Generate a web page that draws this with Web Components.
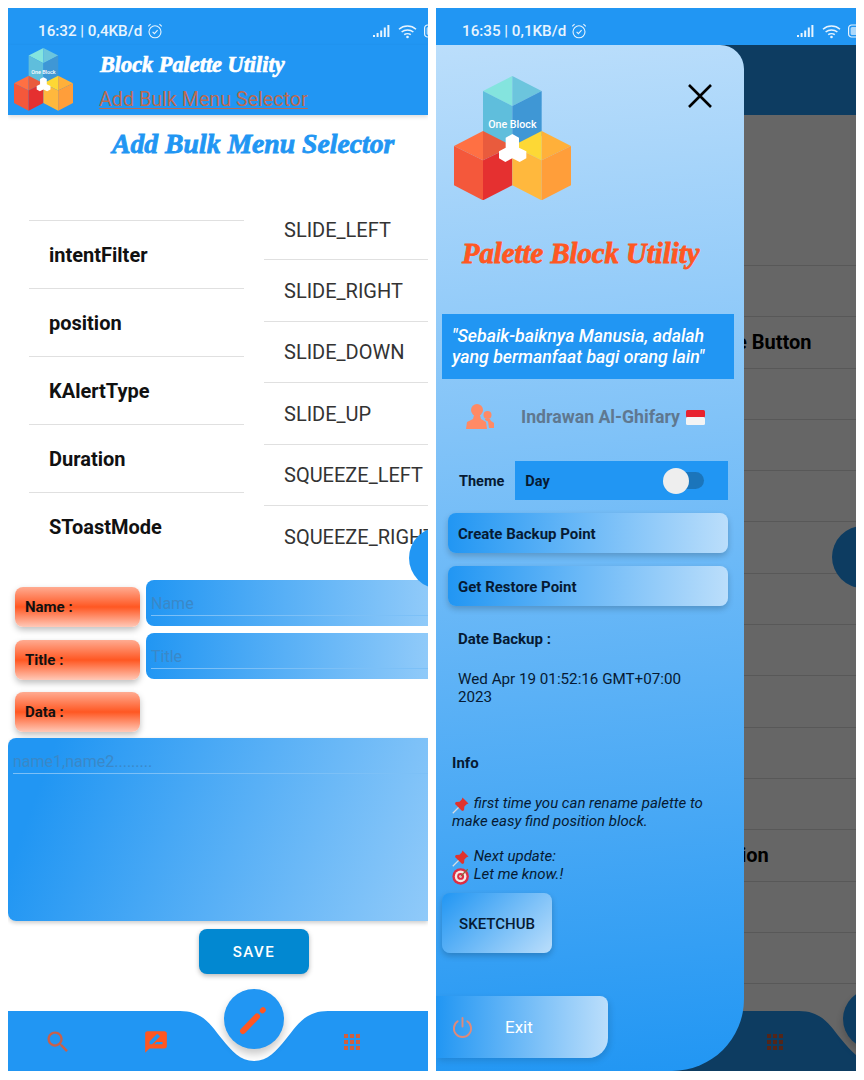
<!DOCTYPE html>
<html>
<head>
<meta charset="utf-8">
<title>Block Palette Utility</title>
<style>
    html, body { background: #fff; }
    body { margin: 8px; display: flex; gap: 8px; font-family: Roboto, sans-serif; }
</style>
</head>
<body>
<bulk-screen></bulk-screen>
<settings-screen></settings-screen>

<script>
const ICONS = {
    search: "M15.5 14h-.79l-.28-.27C15.41 12.59 16 11.11 16 9.5 16 5.91 13.09 3 9.5 3S3 5.91 3 9.5 5.91 16 9.5 16c1.61 0 3.09-.59 4.23-1.57l.27.28v.79l5 4.99L20.49 19l-4.99-5zm-6 0C7.01 14 5 11.99 5 9.5S7.01 5 9.5 5 14 7.01 14 9.5 11.99 14 9.5 14z",
    review: "M20 2H4c-1.1 0-2 .9-2 2v18l4-4h14c1.1 0 2-.9 2-2V4c0-1.1-.9-2-2-2zM6 14v-2.47l6.88-6.88c.2-.2.51-.2.71 0l1.77 1.77c.2.2.2.51 0 .71L8.47 14H6zm12 0h-7.5l2-2H18v2z",
    apps: "M4 8h4V4H4v4zm6 12h4v-4h-4v4zm-6 0h4v-4H4v4zm0-6h4v-4H4v4zm6 0h4v-4h-4v4zm6-10v4h4V4h-4zm-6 4h4V4h-4v4zm6 6h4v-4h-4v4zm0 6h4v-4h-4v4z"
};

const PIN = `<svg width="18" height="18" viewBox="0 0 24 24" style="vertical-align:-3px;margin:-3px 0"><path d="M1 23 11 13" stroke="#d7dde3" stroke-width="1.6"/><path d="M14 2 22 10 19.5 11 16.5 14 16 19 13.5 20 4 10.5 5 8 10 7.5 13 4.5Z" fill="#e0332e"/></svg>`;
const TARGET = `<svg width="18" height="18" viewBox="0 0 24 24" style="vertical-align:-3px;margin:-3px 0"><circle cx="11.5" cy="12.5" r="11" fill="#dd2e44"/><circle cx="11.5" cy="12.5" r="7.8" fill="#f4e9e4"/><circle cx="11.5" cy="12.5" r="4.6" fill="#dd2e44"/><circle cx="11.5" cy="12.5" r="1.8" fill="#f4e9e4"/><path d="M11.5 12.5 21 3" stroke="#8a6a3a" stroke-width="1.6"/></svg>`;

class blockLogo extends HTMLElement {
    constructor() {
        super();
        this.attachShadow({ mode: "open" });
    }

    connectedCallback() {
        const width = this.getAttribute("width") || 117;
        this.shadowRoot.innerHTML = `
        <style>
            :host { display: block; line-height: 0; }
            text { font-family: Roboto, sans-serif; font-weight: 500; font-size: 32px; fill: #fff; text-anchor: middle; }
        </style>
        <svg width="${width}" viewBox="0 0 351 373">
            <polygon points="175,0 175,90 87,45" fill="#84e4de"/>
            <polygon points="175,0 263,45 175,90" fill="#6cc5dd"/>
            <polygon points="87,45 175,90 175,215 87,180" fill="#5fbedc"/>
            <polygon points="175,90 263,45 263,180 175,215" fill="#3f97d5"/>
            <polygon points="87,165 87,253 0,210" fill="#ff7043"/>
            <polygon points="87,165 175,210 87,253" fill="#e95b3d"/>
            <polygon points="0,210 87,253 87,373 0,328" fill="#f4583b"/>
            <polygon points="87,253 175,210 175,328 87,373" fill="#e53030"/>
            <polygon points="263,165 263,253 175,210" fill="#fdd835"/>
            <polygon points="263,165 351,210 263,253" fill="#ffb03a"/>
            <polygon points="175,210 263,253 263,373 175,328" fill="#ffb83d"/>
            <polygon points="263,253 351,210 351,328 263,373" fill="#ff9e3a"/>
            <g fill="#fff">
                <polygon points="175,174 195,185 195,215 217,226 217,247 197,258 175,247 154,258 135,247 135,226 155,215 155,185"/>
            </g>
            <text x="175" y="156">One Block</text>
        </svg>`;
    }
}

class statusBar extends HTMLElement {
    constructor() {
        super();
        this.attachShadow({ mode: "open" });
    }

    connectedCallback() {
        const time = this.getAttribute("time") || "";
        this.shadowRoot.innerHTML = `
        <style>
            :host { display: flex; height: 37px; box-sizing: border-box; padding: 14px 0 0 var(--start, 30px); background: #2196f3; color: #e8f4fe; align-items: flex-start; justify-content: space-between; overflow: hidden; }
            .left { display: flex; align-items: center; gap: 5px; font: 500 15.2px/18px Roboto, sans-serif; white-space: nowrap; }
            .right { display: flex; align-items: center; gap: 7px; height: 18px; margin-right: var(--edge, 0px); }
        </style>
        <div class="left">
            <span>${time}</span>
            <svg width="16" height="16" viewBox="0 0 16 16" fill="none" stroke="#e8f4fe" stroke-width="1.1"><circle cx="8" cy="8.8" r="6"/><path d="M5.6 8.8 7.4 10.6 10.6 7.2M1.2 3.4 3.6 1.2M14.8 3.4 12.4 1.2"/></svg>
        </div>
        <div class="right">
            <svg width="18" height="14" viewBox="0 0 18 14" fill="#e8f4fe"><rect x="0" y="11" width="2" height="2"/><rect x="3.6" y="9" width="2" height="4"/><rect x="7.2" y="6.5" width="2" height="6.5"/><rect x="10.8" y="3.5" width="2" height="9.5"/><rect x="14.4" y="1" width="2" height="12"/></svg>
            <svg width="19" height="15" viewBox="0 0 19 15" fill="none" stroke="#e8f4fe" stroke-width="1.5"><path d="M1 5.2C5.8.9 13.2.9 18 5.2M3.6 8C6.9 5.2 12.1 5.2 15.4 8M6.2 10.7C8 9.3 11 9.3 12.8 10.7"/><circle cx="9.5" cy="13" r="1.3" fill="#e8f4fe" stroke="none"/></svg>
            <svg width="24" height="14" viewBox="0 0 24 14" fill="none" stroke="#e8f4fe" stroke-width="1.2"><rect x=".6" y="1" width="21" height="12" rx="3"/><rect x="2.6" y="3" width="15" height="8" rx="1.5" fill="#e8f4fe" stroke="none" opacity=".7"/></svg>
        </div>`;
    }
}

class appHeader extends HTMLElement {
    constructor() {
        super();
        this.attachShadow({ mode: "open" });
    }

    connectedCallback() {
        this.shadowRoot.innerHTML = `
        <style>
            :host { display: flex; height: 70px; background: #2196f3; box-shadow: 0 2px 4px rgba(0,0,0,.14); position: relative; }
            block-logo { margin: 3px 27px 0 6px; }
            h1 { margin: 7px 0 0; height: 26px; font: italic 700 22.3px/26px "Liberation Serif", serif; color: #fff; -webkit-text-stroke: .7px #fff; white-space: nowrap; }
            a { display: block; margin: 10px 0 0 -1px; font: 400 19.7px/24px Roboto, sans-serif; color: #bd6a50; white-space: nowrap; }
            a span { text-decoration: underline 1px #bd6a50; text-underline-offset: 2px; }
        </style>
        <block-logo width="59"></block-logo>
        <div>
            <h1><slot name="title"></slot></h1>
            <a><span><slot name="sub"></slot></span></a>
        </div>`;
    }
}

class menuRow extends HTMLElement {
    constructor() {
        super();
        this.attachShadow({ mode: "open" });
    }

    connectedCallback() {
        this.shadowRoot.innerHTML = `
        <style>
            :host { display: flex; align-items: center; box-sizing: border-box; padding: 1px 0 0 20px; font-size: 20px; white-space: nowrap; color: #333; overflow: hidden; }
            :host([strong]) { font-weight: 700; color: #111; }
        </style>
        <slot></slot>`;
    }
}

class formField extends HTMLElement {
    constructor() {
        super();
        this.attachShadow({ mode: "open" });
    }

    connectedCallback() {
        const label = this.getAttribute("label") || "";
        const hint = this.getAttribute("hint");
        this.shadowRoot.innerHTML = `
        <style>
            :host { display: flex; gap: 6px; height: 52.6px; padding-left: 7px; }
            .label { width: 125px; height: 40px; margin-top: 7px; box-sizing: border-box; padding-left: 10px; border-radius: 8px; display: flex; align-items: center; font: 700 15px Roboto, sans-serif; color: #111; background: linear-gradient(180deg, #ffab91 0%, #ff5722 50%, #ffc9b8 100%); box-shadow: 0 3px 6px rgba(0,0,0,.25); }
            .input { flex: 1; height: 46px; box-sizing: border-box; padding: 15px 0 0 5px; border-radius: 8px 0 0 8px; background: linear-gradient(90deg, #2196f3, #90caf9); font: 400 16px/18px Roboto, sans-serif; color: #3a88c8; }
            .input div { border-bottom: 1px solid #7cc0f7; height: 20px; }
        </style>
        <div class="label">${label}</div>
        ${hint ? `<div class="input"><div>${hint}</div></div>` : ""}`;
    }
}

class bottomNav extends HTMLElement {
    constructor() {
        super();
        this.attachShadow({ mode: "open" });
    }

    connectedCallback() {
        const n = Number(this.getAttribute("notch") || 246);
        const cell = this.getAttribute("cell") || 98;
        const notch = `M0 0H${n - 74}C${n - 50} 0 ${n - 42} 16 ${n - 32} 28C${n - 22} 40 ${n - 14} 50 ${n} 50C${n + 14} 50 ${n + 22} 40 ${n + 32} 28C${n + 42} 16 ${n + 50} 0 ${n + 74} 0H420V60H0Z`;
        this.shadowRoot.innerHTML = `
        <style>
            :host { display: grid; grid-template-columns: repeat(4, ${cell}px); justify-items: center; align-items: center; height: 60px; position: relative; padding-left: 1px; }
            .shape { position: absolute; inset: 0; }
            .item { position: relative; display: flex; margin-top: 2px; }
            .fab { position: absolute; left: ${n - 30}px; top: -22px; width: 60px; height: 60px; border-radius: 50%; background: #2196f3; box-shadow: 0 5px 8px rgba(0,0,0,.22); }
        </style>
        <svg class="shape" width="420" height="60" viewBox="0 0 420 60"><path d="${notch}" fill="#2196f3"/></svg>
        <svg class="item" width="28" height="28" viewBox="0 0 24 24" fill="#c9604a"><path d="${ICONS.search}"/></svg>
        <svg class="item" width="26" height="26" viewBox="0 0 24 24" fill="#ff5722"><path d="${ICONS.review}"/></svg>
        <span></span>
        <svg class="item" width="24" height="24" viewBox="0 0 24 24" fill="#d0603f"><path d="${ICONS.apps}"/></svg>
        <div class="fab">
            <svg width="60" height="60" viewBox="0 0 60 60" fill="none" stroke="#ff5722" stroke-linecap="round"><path d="M19 42 33 27.5" stroke-width="6"/><path d="M38.5 21.5 39 21" stroke-width="5.5"/></svg>
        </div>`;
    }
}

class bulkScreen extends HTMLElement {
    constructor() {
        super();
        this.attachShadow({ mode: "open" });
    }

    connectedCallback() {
        this.shadowRoot.innerHTML = `
        <style>
            :host { display: flex; flex-direction: column; width: 420px; height: 1063px; position: relative; overflow: hidden; background: #fff; font-family: Roboto, sans-serif; }
            h2 { margin: 0; height: 84px; box-sizing: border-box; padding: 12px 0 0 104px; font: italic 700 27.7px/34px "Liberation Serif", serif; color: #2196f3; -webkit-text-stroke: .8px #2196f3; white-space: nowrap; }
            .lists { display: flex; height: 381px; }
            .left { width: 215px; margin: 21px 20px 0 21px; }
            .left menu-row { height: 68px; border-top: 1px solid #e0e0e0; }
            .right { width: 164px; }
            .right menu-row { height: 61.4px; border-bottom: 1px solid #e0e0e0; }
            .right menu-row:last-child { border-bottom: 0; }
            .area { height: 183px; box-sizing: border-box; padding: 15px 0 0 5px; border-radius: 8px 0 0 8px; background: linear-gradient(110deg, #2196f3 10%, #90caf9 100%); box-shadow: 0 2px 4px rgba(0,0,0,.2); font: 400 16px/18px Roboto, sans-serif; color: #3a88c8; }
            .area div { height: 20px; border-bottom: 1px solid #7cc0f7; }
            .save { margin: 8px 0 37px 191px; width: 110px; height: 45px; padding-top: 1px; box-sizing: border-box; border-radius: 8px; background: #0288d1; color: #fff; display: flex; align-items: center; justify-content: center; font: 500 15px Roboto, sans-serif; letter-spacing: 1.5px; box-shadow: 0 2px 5px rgba(0,0,0,.28); }
            .side-fab { position: absolute; left: 401px; top: 519px; width: 62px; height: 62px; border-radius: 50%; background: #2196f3; }
        </style>
        <status-bar time="16:32 | 0,4KB/d" style="--edge:-20px"></status-bar>
        <app-header>
            <span slot="title">Block Palette Utility</span>
            <span slot="sub">Add Bulk Menu Selector</span>
        </app-header>
        <h2>Add Bulk Menu Selector</h2>
        <div class="lists">
            <div class="left">
                <menu-row strong>intentFilter</menu-row>
                <menu-row strong>position</menu-row>
                <menu-row strong>KAlertType</menu-row>
                <menu-row strong>Duration</menu-row>
                <menu-row strong>SToastMode</menu-row>
            </div>
            <div class="right">
                <menu-row>SLIDE_LEFT</menu-row>
                <menu-row>SLIDE_RIGHT</menu-row>
                <menu-row>SLIDE_DOWN</menu-row>
                <menu-row>SLIDE_UP</menu-row>
                <menu-row>SQUEEZE_LEFT</menu-row>
                <menu-row>SQUEEZE_RIGHT</menu-row>
            </div>
        </div>
        <form-field label="Name :" hint="Name"></form-field>
        <form-field label="Title :" hint="Title"></form-field>
        <form-field label="Data :"></form-field>
        <div class="area"><div>name1,name2.........</div></div>
        <div class="save">SAVE</div>
        <bottom-nav></bottom-nav>
        <div class="side-fab"></div>`;
    }
}

class drawerButton extends HTMLElement {
    constructor() {
        super();
        this.attachShadow({ mode: "open" });
    }

    connectedCallback() {
        this.shadowRoot.innerHTML = `
        <style>
            :host { display: flex; align-items: center; box-sizing: border-box; padding-top: 1px; border-radius: 8px; background: linear-gradient(90deg, #2196f3, #bbdefb); box-shadow: 0 3px 6px rgba(0,0,0,.2); font: 700 15px Roboto, sans-serif; color: #061a33; }
        </style>
        <slot></slot>`;
    }
}

class appDrawer extends HTMLElement {
    constructor() {
        super();
        this.attachShadow({ mode: "open" });
    }

    connectedCallback() {
        this.shadowRoot.innerHTML = `
        <style>
            :host { display: flex; flex-direction: column; position: absolute; left: 0; top: 37px; width: 308px; height: 1026px; border-radius: 0 24px 72px 0; background: linear-gradient(175deg, #bbdefb 0%, #2196f3 100%); font-family: Roboto, sans-serif; color: #061a33; overflow: hidden; }
            .top { display: flex; justify-content: space-between; align-items: flex-start; height: 125px; padding: 31px 32px 0 18px; }
            .close { margin-top: 8px; }
            h2 { margin: 35px 0 0; height: 34px; padding-left: 26px; font: italic 700 28.7px/34px "Liberation Serif", serif; color: #ff5722; -webkit-text-stroke: .8px #ff5722; white-space: nowrap; }
            .quote { margin: 44px 0 0 6px; width: 292px; height: 65px; box-sizing: border-box; padding: 12px 0 0 10px; background: #2196f3; color: #fff; font: italic 500 17.7px/21px Roboto, sans-serif; white-space: nowrap; }
            .author { display: flex; align-items: center; margin-top: 21px; height: 34px; padding-left: 30px; font: 700 17.7px Roboto, sans-serif; color: #5f7890; white-space: nowrap; }
            .author svg:first-child { margin-right: 27px; }
            .author .flag { margin-left: 6px; }
            .theme { display: flex; align-items: center; margin: 27px 0 0 23px; height: 39px; font: 700 14.5px Roboto, sans-serif; }
            .theme > span, .day > span { padding-top: 2px; }
            .day { display: flex; align-items: center; justify-content: space-between; width: 213px; height: 39px; margin-left: 11px; box-sizing: border-box; padding: 0 24px 0 10px; background: #2196f3; }
            .switch { position: relative; width: 40px; height: 17px; border-radius: 9px; background: #1b75bb; }
            .switch i { position: absolute; left: -1px; top: -4.5px; width: 26px; height: 26px; border-radius: 50%; background: #eee; }
            .action { margin: 13px 0 0 12px; width: 280px; height: 40px; padding-left: 10px; }
            .bold { font: 700 15px/18px Roboto, sans-serif; }
            .date { margin: 22px 0 0 22px; height: 36px; width: 240px; font: 400 15.2px/18px Roboto, sans-serif; }
            .notes { margin: 23px 0 0 16px; height: 88.5px; font: italic 400 15px/17.7px Roboto, sans-serif; white-space: nowrap; }
            .sketchub { margin: 9.5px 0 0 6px; width: 110px; height: 60px; justify-content: center; background: linear-gradient(135deg, #2196f3, #bbdefb); font: 500 15px Roboto, sans-serif; }
            .exit { display: flex; align-items: center; margin-top: 43px; width: 172px; height: 62px; box-sizing: border-box; padding-left: 16px; border-radius: 0 8px 20px 0; background: linear-gradient(90deg, #2196f3, #bbdefb); box-shadow: 2px 3px 6px rgba(0,0,0,.12); color: #fff; font: 400 17px Roboto, sans-serif; }
            .exit svg { margin-right: 32px; }
        </style>
        <div class="top">
            <block-logo width="117"></block-logo>
            <svg class="close" width="24" height="24" viewBox="0 0 24 24" fill="none" stroke="#000" stroke-width="2.6"><path d="M1 1 23 23M23 1 1 23"/></svg>
        </div>
        <h2>Palette Block Utility</h2>
        <div class="quote">"Sebaik-baiknya Manusia, adalah<br>yang bermanfaat bagi orang lain"</div>
        <div class="author">
            <svg width="28" height="28" viewBox="0 0 28 28" fill="#ff8a65"><circle cx="11" cy="7" r="6"/><path d="M8 12h6l1 4 5 3 1 7H0l1-7 6-3z"/><circle cx="21.5" cy="12" r="4"/><path d="M19 16h5l1 2 3 2v5h-5l-1-6.5-3-1.5z"/></svg>
            <span>Indrawan Al-Ghifary</span>
            <svg class="flag" width="19" height="15" viewBox="0 0 19 15"><rect width="19" height="7.5" rx="1.5" fill="#e8222e"/><rect y="7" width="19" height="8" rx="1.5" fill="#f4f4f4"/></svg>
        </div>
        <div class="theme">
            <span>Theme</span>
            <div class="day"><span>Day</span><div class="switch"><i></i></div></div>
        </div>
        <drawer-button class="action">Create Backup Point</drawer-button>
        <drawer-button class="action">Get Restore Point</drawer-button>
        <div class="bold" style="margin:24px 0 0 22px">Date Backup :</div>
        <div class="date">Wed Apr 19 01:52:16 GMT+07:00 2023</div>
        <div class="bold" style="margin:48px 0 0 16px">Info</div>
        <div class="notes">${PIN} first time you can rename palette to<br>make easy find position block.<br><br>${PIN} Next update:<br>${TARGET} Let me know.!</div>
        <drawer-button class="sketchub">SKETCHUB</drawer-button>
        <div class="exit">
            <svg width="21" height="21" viewBox="0 0 22 22" fill="none" stroke="#e08a7a" stroke-width="2" stroke-linecap="round"><path d="M6 4.5a9 9 0 1 0 10 0M11 1v9"/></svg>
            <span>Exit</span>
        </div>`;
    }
}

class settingsScreen extends HTMLElement {
    constructor() {
        super();
        this.attachShadow({ mode: "open" });
    }

    connectedCallback() {
        const rows = Array.from({ length: 16 }, (_, i) => {
            if (i === 1) return `<div class="row"><span>e Button</span></div>`;
            if (i === 11) return `<div class="row"><span style="padding-left:5px">ion</span></div>`;
            return `<div class="row"></div>`;
        }).join("");
        this.shadowRoot.innerHTML = `
        <style>
            :host { display: flex; flex-direction: column; width: 420px; height: 1063px; position: relative; overflow: hidden; background: #fff; font-family: Roboto, sans-serif; }
            .bar { height: 70px; background: #2196f3; flex: none; }
            .rows { flex: 1; padding-top: 150px; overflow: hidden; }
            .row { display: flex; align-items: center; height: 51.3px; box-sizing: border-box; border-top: 1px solid #dcdcdc; padding-left: 300px; font: 700 20px Roboto, sans-serif; color: #000; }
            .side-fab { position: absolute; left: 396px; top: 518px; width: 62px; height: 62px; border-radius: 50%; background: #2196f3; }
            .scrim { position: absolute; left: 0; right: 0; top: 37px; bottom: 0; background: rgba(0,0,0,.6); }
        </style>
        <status-bar time="16:35 | 0,1KB/d" style="--start:26px;--edge:-16px"></status-bar>
        <div class="bar"></div>
        <div class="rows">${rows}</div>
        <bottom-nav notch="437" cell="96.7"></bottom-nav>
        <div class="side-fab"></div>
        <div class="scrim"></div>
        <app-drawer></app-drawer>`;
    }
}

customElements.define("block-logo", blockLogo);
customElements.define("status-bar", statusBar);
customElements.define("app-header", appHeader);
customElements.define("menu-row", menuRow);
customElements.define("form-field", formField);
customElements.define("bottom-nav", bottomNav);
customElements.define("bulk-screen", bulkScreen);
customElements.define("drawer-button", drawerButton);
customElements.define("app-drawer", appDrawer);
customElements.define("settings-screen", settingsScreen);
</script>
</body>
</html>
